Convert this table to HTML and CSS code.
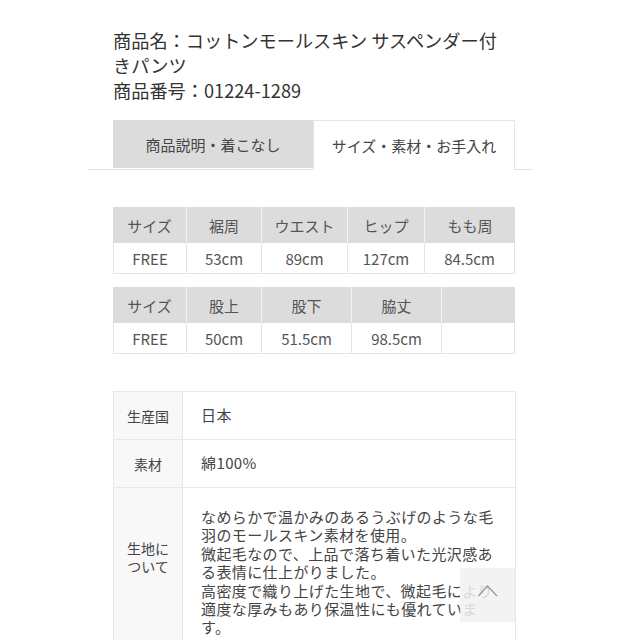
FILE: index.html
```html
<!DOCTYPE html>
<html lang="ja">
<head>
<meta charset="utf-8">
<title>商品詳細</title>
<link rel="stylesheet" href="styles.css">
</head>
<body>
<div class="page">
  <div class="title">
    <p>商品名：コットンモールスキン サスペンダー付きパンツ</p>
    <p>商品番号：01224-1289</p>
  </div>

  <div class="tabs">
    <div class="tab">商品説明・着こなし</div>
    <div class="tab active">サイズ・素材・お手入れ</div>
  </div>

  <table class="size size1">
    <tr><th>サイズ</th><th>裾周</th><th>ウエスト</th><th>ヒップ</th><th>もも周</th></tr>
    <tr><td>FREE</td><td>53cm</td><td>89cm</td><td>127cm</td><td>84.5cm</td></tr>
  </table>

  <table class="size size2">
    <tr><th>サイズ</th><th>股上</th><th>股下</th><th>脇丈</th><th></th></tr>
    <tr><td>FREE</td><td>50cm</td><td>51.5cm</td><td>98.5cm</td><td></td></tr>
  </table>

  <table class="info">
    <tr><th>生産国</th><td>日本</td></tr>
    <tr><th>素材</th><td>綿100%</td></tr>
    <tr class="long"><th>生地について</th><td>なめらかで温かみのあるうぶげのような毛羽のモールスキン素材を使用。<br>微起毛なので、上品で落ち着いた光沢感ある表情に仕上がりました。<br>高密度で織り上げた生地で、微起毛により適度な厚みもあり保温性にも優れています。</td></tr>
  </table>
</div>

<button class="totop" aria-label="ページトップへ">
  <svg width="22" height="14" viewBox="0 0 22 14"><polyline points="1.5,12 10.5,2 20,12" fill="none" stroke="#9a9a9a" stroke-width="1.3"/></svg>
</button>
</body>
</html>
```
FILE: styles.css
```css
html, body {
  margin: 0;
  padding: 0;
  background: #fff;
}
body {
  font-family: "Noto Sans CJK JP", "Noto Sans", sans-serif;
  color: #333;
}
.page {
  width: 402px;
  margin-left: 113px;
  padding-top: 28px;
}
.title {
  width: 394px;
  font-size: 18.2px;
  line-height: 25px;
  color: #333;
}
.title p {
  margin: 0;
}
.tabs {
  display: flex;
  margin: 17px -18px 0 -25px;
  padding: 0 18px 0 25px;
  border-bottom: 1px solid #e4e4e4;
}
.tab {
  flex: 1;
  height: 48px;
  display: flex;
  align-items: center;
  justify-content: center;
  font-size: 15px;
  color: #444;
  background: #dcdcdc;
}
.tab.active {
  background: #fff;
  border: 1px solid #e6e6e6;
  border-bottom: 0;
  height: 48px;
  margin-bottom: -1px;
  padding-bottom: 1px;
}
.size {
  width: 402px;
  table-layout: fixed;
  border-collapse: separate;
  border-spacing: 0;
  font-size: 15px;
  color: #555;
  text-align: center;
}
.size th, .size td {
  box-sizing: border-box;
}
.size1 { margin-top: 37px; }
.size2 { margin-top: 13px; }
.size th {
  height: 36px;
  padding: 0;
  font-weight: normal;
  background: #dcdcdc;
  border-right: 1px solid #f3f3f3;
}
.size th:last-child { border-right: 0; }
.size td {
  height: 31px;
  padding: 0;
  border-right: 1px solid #e4e4e4;
  border-bottom: 1px solid #e4e4e4;
}
.size td:first-child { border-left: 1px solid #e4e4e4; }
.size1 th:nth-child(1) { width: 74px; }
.size1 th:nth-child(2) { width: 75px; }
.size1 th:nth-child(3) { width: 86px; }
.size1 th:nth-child(4) { width: 77px; }
.size1 th:nth-child(5) { width: 90px; }
.size2 th:nth-child(1) { width: 74px; }
.size2 th:nth-child(2) { width: 75px; }
.size2 th:nth-child(3) { width: 90px; }
.size2 th:nth-child(4) { width: 90px; }
.size2 th:nth-child(5) { width: 73px; }

.info {
  width: 403px;
  margin-top: 37px;
  border-collapse: collapse;
  table-layout: fixed;
  color: #444;
}
.info th, .info td {
  border: 1px solid #e8e8e8;
}
.info th {
  width: 44px;
  padding: 0 12px;
  background: #f8f8f8;
  font-weight: normal;
  font-size: 14px;
  line-height: 18px;
  text-align: center;
  vertical-align: middle;
  height: 47px;
}
.info td {
  padding: 0 19px 0 18px;
  font-size: 15px;
  letter-spacing: 0.4px;
  line-height: 18.4px;
  vertical-align: middle;
}
.info .long th {
  vertical-align: top;
  padding-top: 51px;
}
.info .long td {
  padding-top: 20px;
  padding-bottom: 20px;
  vertical-align: top;
}
.totop {
  position: fixed;
  left: 460px;
  top: 568px;
  width: 55px;
  height: 54px;
  padding: 0 0 8px;
  border: 0;
  background: rgba(241, 241, 241, 0.85);
  display: flex;
  align-items: center;
  justify-content: center;
}
```
